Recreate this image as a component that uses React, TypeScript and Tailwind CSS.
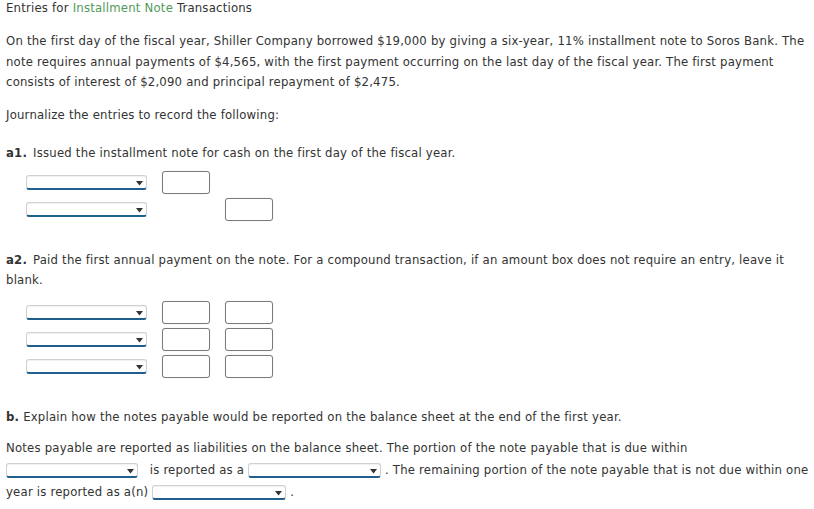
import React from "react";

const Caret = () => (
  <svg width="7" height="5" viewBox="0 0 7 5" className="absolute right-[3px] top-[5px]">
    <path d="M0 0 L7 0 L3.5 4.5 Z" fill="#333" />
  </svg>
);

const Dropdown = ({ w = "w-[121px]" }: { w?: string }) => (
  <span
    className={`relative inline-block ${w} h-[15px] align-middle bg-white rounded-[3px] border border-[#d0d0d0] border-b-2 border-b-[#1f5f8c] shadow-[inset_0_1px_1px_rgba(0,0,0,0.06)]`}
  >
    <Caret />
  </span>
);

const Box = ({ hidden = false }: { hidden?: boolean }) => (
  <div
    className={`w-[48px] h-[23px] rounded-[3px] border ${
      hidden ? "border-transparent" : "border-[#7a7a7a] bg-white shadow-[0_0_1px_rgba(0,0,0,0.2)]"
    }`}
  />
);

const EntryRow = ({ boxes }: { boxes: boolean[] }) => (
  <div className="flex items-center h-[27px]">
    <Dropdown />
    <div className="flex gap-[15px] ml-[15px]">
      {boxes.map((show, i) => (
        <Box key={i} hidden={!show} />
      ))}
    </div>
  </div>
);

export default function App() {
  return (
    <div
      className="w-[814px] min-h-[509px] bg-white text-[#333] text-[13px] tracking-[0.2px] px-[6px] pt-0"
      style={{ fontFamily: "Verdana, 'DejaVu Sans Condensed', 'DejaVu Sans', sans-serif" }}
    >
      <div className="leading-[16px]">
        Entries for <span className="text-[#4f9a5a]">Installment Note</span> Transactions
      </div>

      <p className="mt-[15px] leading-[20.5px] w-[802px]">
        On the first day of the fiscal year, Shiller Company borrowed $19,000 by giving a six-year, 11% installment note to Soros Bank. The note requires annual payments of $4,565, with the first payment occurring on the last day of the fiscal year. The first payment consists of interest of $2,090 and principal repayment of $2,475.
      </p>

      <p className="mt-[12px] leading-[20px]">Journalize the entries to record the following:</p>

      <p className="mt-[18px] leading-[20px]">
        <span className="font-bold mr-[6px]">a1.</span>Issued the installment note for cash on the first day of the fiscal year.
      </p>

      <div className="mt-[6px] pl-[20px]">
        <EntryRow boxes={[true]} />
        <EntryRow boxes={[false, true]} />
      </div>

      <p className="mt-[27px] leading-[20.5px] w-[790px]">
        <span className="font-bold mr-[6px]">a2.</span>Paid the first annual payment on the note. For a compound transaction, if an amount box does not require an entry, leave it blank.
      </p>

      <div className="mt-[8px] pl-[20px]">
        <EntryRow boxes={[true, true]} />
        <EntryRow boxes={[true, true]} />
        <EntryRow boxes={[true, true]} />
      </div>

      <p className="mt-[27px] leading-[20px]">
        <span className="font-bold">b.</span> Explain how the notes payable would be reported on the balance sheet at the end of the first year.
      </p>

      <p className="mt-[10px] leading-[22px] whitespace-nowrap">
        Notes payable are reported as liabilities on the balance sheet. The portion of the note payable that is due within
        <br />
        <Dropdown w="w-[132px]" /> &nbsp;&nbsp;is reported as a <Dropdown w="w-[133px]" /> . The remaining portion of the note payable that is not due within one
        <br />
        year is reported as a(n) <Dropdown w="w-[134px]" /> .
      </p>
    </div>
  );
}
